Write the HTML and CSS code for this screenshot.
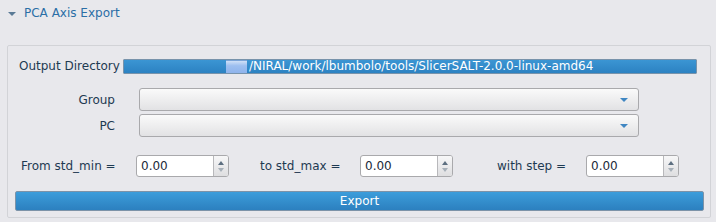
FILE: index.html
```html
<!DOCTYPE html>
<html lang="en">
<head>
  <meta charset="UTF-8" />
  <title>PCA Axis Export</title>
  <link rel="stylesheet" href="styles.css">
</head>
<body>
  <div class="section-header">
    <span class="collapse-arrow"></span>
    <span class="section-title">PCA Axis Export</span>
  </div>

  <div class="group-box">
    <div class="dir-row">
      <span class="label dir-label">Output Directory</span>
      <div class="dir-bar">
        <span class="dir-fill"></span>
        <span class="dir-knob"></span>
        <span class="dir-text">/NIRAL/work/lbumbolo/tools/SlicerSALT-2.0.0-linux-amd64</span>
      </div>
    </div>

    <div class="combo-grid">
      <span class="label right">Group</span>
      <div class="combo"><span class="combo-arrow"></span></div>
      <span class="label right">PC</span>
      <div class="combo"><span class="combo-arrow"></span></div>
    </div>

    <div class="spin-row">
      <span class="label spin-label first">From std_min =</span>
      <div class="spinbox">
        <span class="spin-value">0.00</span>
        <span class="spin-buttons"><i class="up"></i><i class="down"></i></span>
      </div>
      <span class="label spin-label second">to std_max =</span>
      <div class="spinbox">
        <span class="spin-value">0.00</span>
        <span class="spin-buttons"><i class="up"></i><i class="down"></i></span>
      </div>
      <span class="label spin-label third">with step =</span>
      <div class="spinbox">
        <span class="spin-value">0.00</span>
        <span class="spin-buttons"><i class="up"></i><i class="down"></i></span>
      </div>
    </div>

    <button class="export-btn">Export</button>
  </div>
</body>
</html>
```
FILE: styles.css
```css
body {
  margin: 0;
  width: 716px;
  height: 222px;
  overflow: hidden;
  background-color: #e8e8ec;
  font-family: "DejaVu Sans", "Noto Sans", sans-serif;
  font-size: 12px;
  color: #1e3a52;
}
.section-header {
  height: 26px;
  display: flex;
  align-items: center;
  padding-left: 8px;
}
.collapse-arrow {
  width: 0;
  height: 0;
  border-left: 4px solid transparent;
  border-right: 4px solid transparent;
  border-top: 4px solid #5a7a96;
  margin-right: 8px;
  margin-top: 1px;
}
.section-title {
  font-size: 12px;
  color: #2b6ea6;
}
.group-box {
  margin: 19px 0 0 7px;
  width: 704px;
  height: 173px;
  border: 1px solid #d2d3d7;
  border-radius: 2px;
  box-sizing: border-box;
  padding: 12px 0 0 11px;
}
.label {
  white-space: nowrap;
  line-height: 16px;
}
.dir-row {
  display: flex;
  align-items: center;
  height: 16px;
}
.dir-label {
  width: 104px;
}
.dir-bar {
  position: relative;
  width: 574px;
  height: 15px;
  box-sizing: border-box;
  border: 1px solid #7893ab;
  border-radius: 1px;
  background: linear-gradient(#3b95d3, #2c82c2);
  display: flex;
  align-items: center;
}
.dir-fill {
  width: 102px;
}
.dir-knob {
  width: 21px;
  height: 13px;
  background: linear-gradient(#cfe0f7, #9dbff0 40%, #8fb4ec);
  border-top: 1px solid #7aa4d8;
  box-sizing: border-box;
}
.dir-text {
  color: #ffffff;
  margin-left: 2px;
  line-height: 13px;
}
.combo-grid {
  display: grid;
  grid-template-columns: 96px 500px;
  column-gap: 24px;
  row-gap: 3px;
  align-items: center;
  margin-top: 14px;
}
.right {
  text-align: right;
}
.combo {
  position: relative;
  height: 23px;
  box-sizing: border-box;
  border: 1px solid #a9a9ac;
  border-radius: 3px;
  background: linear-gradient(#fafafa, #e2e2e4);
}
.combo-arrow {
  position: absolute;
  right: 10px;
  top: 9px;
  width: 0;
  height: 0;
  border-left: 4px solid transparent;
  border-right: 4px solid transparent;
  border-top: 4px solid #3f86c2;
}
.spin-row {
  display: flex;
  align-items: center;
  margin-top: 18px;
  padding-left: 2px;
}
.spin-label.first {
  width: 115px;
}
.spin-label.second {
  margin-left: 31px;
  width: 100px;
}
.spin-label.third {
  margin-left: 44px;
  width: 89px;
}
.spinbox {
  display: flex;
  width: 93px;
  height: 22px;
  box-sizing: border-box;
  border: 1px solid #a9a9ac;
  border-radius: 3px;
  background-color: #ffffff;
  overflow: hidden;
}
.spin-value {
  flex: 1;
  padding-left: 4px;
  line-height: 20px;
  color: #1b2a3a;
}
.spin-buttons {
  width: 14px;
  border-left: 1px solid #b8b8bb;
  background: linear-gradient(#f7f7f8, #dedee0);
  display: flex;
  flex-direction: column;
  align-items: center;
  justify-content: center;
  gap: 3px;
}
.spin-buttons i {
  width: 0;
  height: 0;
  border-left: 3px solid transparent;
  border-right: 3px solid transparent;
}
.spin-buttons .up {
  border-bottom: 4px solid #5d6f80;
}
.spin-buttons .down {
  border-top: 4px solid #a7b0b9;
}
.export-btn {
  display: block;
  margin: 14px 0 0 -4px;
  width: 689px;
  height: 20px;
  padding: 0;
  border: 1px solid #7d93a8;
  border-radius: 2px;
  background: linear-gradient(#3c9ddb, #2c80bf);
  color: #ffffff;
  font-family: inherit;
  font-size: 12px;
  line-height: 18px;
}
```
